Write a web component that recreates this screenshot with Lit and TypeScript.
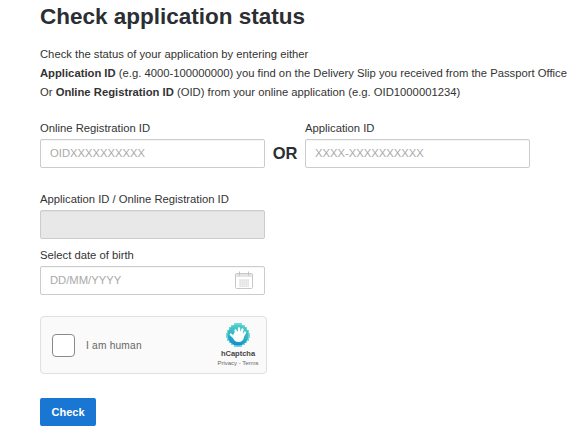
import { LitElement, html, css, svg } from "lit";
import { customElement } from "lit/decorators.js";

@customElement("app-root")
export class AppRoot extends LitElement {
  static styles = css`
    :host {
      display: block;
      width: 581px;
      height: 433px;
      overflow: hidden;
      background: #fff;
      font-family: "Liberation Sans", Arial, sans-serif;
      font-size: 11.25px;
      color: #333;
    }
    .page {
      padding: 0 0 0 40px;
      display: flex;
      flex-direction: column;
    }
    h1 {
      margin: 0;
      height: 33px;
      line-height: 33px;
      font-size: 22.5px;
      font-weight: 700;
      color: #2b2e33;
    }
    .intro {
      margin-top: 12px;
      line-height: 19px;
      height: 57px;
      white-space: nowrap;
    }
    .intro div {
      height: 19px;
    }
    .row {
      margin-top: 19px;
      display: flex;
      align-items: flex-end;
    }
    .field {
      display: flex;
      flex-direction: column;
      width: 225px;
    }
    label {
      height: 14px;
      line-height: 14px;
      margin-bottom: 4px;
    }
    .input {
      box-sizing: border-box;
      width: 225px;
      height: 29px;
      border: 1px solid #ccc;
      border-radius: 2px;
      display: flex;
      align-items: center;
      justify-content: space-between;
      padding: 0 11px 1px 9px;
      color: #a9a9a9;
      background: #fff;
      box-shadow: inset 0 1px 1px rgba(0, 0, 0, 0.04);
    }
    .input.off {
      background: #e8e8e8;
    }
    .or {
      width: 40px;
      height: 29px;
      line-height: 29px;
      text-align: center;
      font-size: 16.5px;
      font-weight: 700;
      color: #2b2e33;
    }
    .stack {
      margin-top: 24px;
    }
    .stack2 {
      margin-top: 9px;
    }
    .captcha {
      box-sizing: border-box;
      margin-top: 21px;
      width: 227px;
      height: 58px;
      border: 1px solid #e0e0e0;
      border-radius: 4px;
      background: #fafafa;
      display: flex;
      align-items: center;
      padding-left: 11px;
    }
    .box {
      box-sizing: border-box;
      width: 23px;
      height: 23px;
      border: 1px solid #8a8a8a;
      border-radius: 4px;
      background: #fff;
    }
    .human {
      margin-left: 11px;
      font-size: 10.2px;
      letter-spacing: 0.2px;
      color: #666;
    }
    .brand {
      margin-left: auto;
      width: 50px;
      margin-right: 3px;
      display: flex;
      flex-direction: column;
      align-items: center;
    }
    .brand svg {
      display: block;
      margin-bottom: 1px;
    }
    .name {
      font-size: 7.5px;
      font-weight: 700;
      line-height: 10px;
      color: #444;
    }
    .links {
      font-size: 6px;
      line-height: 9px;
      color: #666;
      white-space: nowrap;
    }
    button {
      margin-top: 24px;
      width: 56px;
      height: 28px;
      padding: 0;
      border: none;
      border-radius: 2px;
      background: #1976d2;
      color: #fff;
      font: 700 11px "Liberation Sans", Arial, sans-serif;
    }
  `;

  private calendar() {
    const dots = [];
    for (const y of [8.5, 10.5, 12.5, 14.5]) {
      for (const x of [4.5, 6.5, 8.5, 10.5, 12.5]) {
        dots.push(svg`<rect x=${x} y=${y} width="1.2" height="1.2" fill="#c4c4c4"></rect>`);
      }
    }
    return html`<svg width="18" height="18" viewBox="0 0 18 18" fill="none">
      <rect x="0.5" y="2.5" width="17" height="15" rx="1" stroke="#c8c8c8"></rect>
      <rect x="1" y="3" width="16" height="3" fill="#e4e4e4"></rect>
      <path d="M4.5 0.5v4M13.5 0.5v4" stroke="#c0c0c0"></path>
      ${dots}
    </svg>`;
  }

  private logo() {
    return html`<svg width="26" height="26" viewBox="0 0 26 26">
      <defs>
        <linearGradient id="hc" x1="0.6" y1="0" x2="0.4" y2="1">
          <stop offset="0" stop-color="#4fd0c4"></stop>
          <stop offset="0.55" stop-color="#2fb4c8"></stop>
          <stop offset="1" stop-color="#0f8ccf"></stop>
        </linearGradient>
      </defs>
      <path d="M9 1h8v2h3v2h2v3h2v3h1v5h-1v3h-2v2h-2v2h-3v2H9v-2H6v-2H4v-2H2v-3H1v-5h1V8h2V5h2V3h3z" fill="#74d9d6"></path>
      <circle cx="13" cy="13" r="10.500" fill="url(#hc)"></circle>
      <circle cx="13.500" cy="14.500" r="5.500" fill="#fff"></circle>
      <path d="M5.800 12.500L10 16.500M10.500 8.500L12 14M14 6.500L14.500 13M17.500 7.500L16 13M20 10.500L17.500 15" stroke="#fff" stroke-width="2.300" stroke-linecap="round" fill="none"></path>
    </svg>`;
  }

  render() {
    return html`<div class="page">
      <h1>Check application status</h1>
      <div class="intro">
        <div>Check the status of your application by entering either</div>
        <div><b>Application ID</b> (e.g. 4000-100000000) you find on the Delivery Slip you received from the Passport Office</div>
        <div>Or <b>Online Registration ID</b> (OID) from your online application (e.g. OID1000001234)</div>
      </div>
      <div class="row">
        <div class="field">
          <label>Online Registration ID</label>
          <div class="input">OIDXXXXXXXXXX</div>
        </div>
        <div class="or">OR</div>
        <div class="field">
          <label>Application ID</label>
          <div class="input">XXXX-XXXXXXXXXX</div>
        </div>
      </div>
      <div class="field stack">
        <label>Application ID / Online Registration ID</label>
        <div class="input off"></div>
      </div>
      <div class="field stack2">
        <label>Select date of birth</label>
        <div class="input">DD/MM/YYYY ${this.calendar()}</div>
      </div>
      <div class="captcha">
        <div class="box"></div>
        <div class="human">I am human</div>
        <div class="brand">
          ${this.logo()}
          <div class="name">hCaptcha</div>
          <div class="links">Privacy - Terms</div>
        </div>
      </div>
      <button>Check</button>
    </div>`;
  }
}
